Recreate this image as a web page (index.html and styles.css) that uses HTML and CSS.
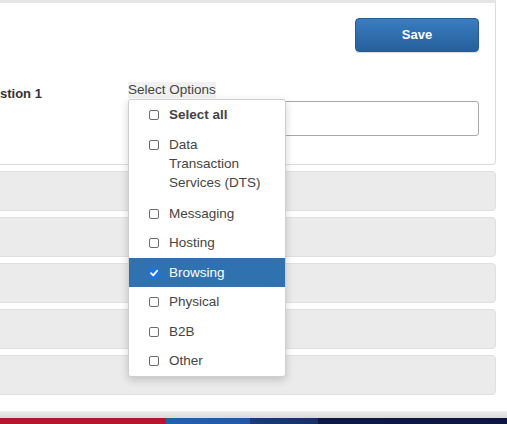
FILE: index.html
```html
<!DOCTYPE html>
<html>
<head>
<meta charset="utf-8">
<link rel="stylesheet" href="styles.css">
</head>
<body>
<div class="page">
  <div class="topband"></div>
  <div class="panel">
    <div class="actions">
      <button class="save">Save</button>
    </div>
    <div class="form-row">
      <div class="q-label"><span class="q-text">stion 1</span></div>
      <div class="field">
        <span class="field-label">Select Options</span>
        <div class="select-box"></div>
        <ul class="menu">
          <li class="item"><span class="cb"></span><span class="txt bold">Select all</span></li>
          <li class="item item-tall"><span class="cb"></span><span class="txt">Data<br>Transaction<br>Services (DTS)</span></li>
          <li class="item"><span class="cb"></span><span class="txt">Messaging</span></li>
          <li class="item"><span class="cb"></span><span class="txt">Hosting</span></li>
          <li class="item active"><span class="cb checked"><svg viewBox="0 0 10 10" width="10" height="10"><path d="M2 5.2 L4.2 7.4 L8.2 2.6" fill="none" stroke="#fff" stroke-width="1.8" stroke-linecap="round" stroke-linejoin="round"/></svg></span><span class="txt">Browsing</span></li>
          <li class="item"><span class="cb"></span><span class="txt">Physical</span></li>
          <li class="item"><span class="cb"></span><span class="txt">B2B</span></li>
          <li class="item"><span class="cb"></span><span class="txt">Other</span></li>
        </ul>
      </div>
    </div>
  </div>
  <div class="rows">
    <div class="row"></div>
    <div class="row"></div>
    <div class="row"></div>
    <div class="row"></div>
    <div class="row"></div>
  </div>
</div>
<div class="footer-line"></div>
<div class="footer-strip"></div>
</body>
</html>
```

FILE: styles.css
```css
html, body {
  margin: 0;
  padding: 0;
  background: #fff;
  font-family: "Liberation Sans", Arial, sans-serif;
  color: #333;
  overflow: hidden;
}

.page {
  width: 496px;
}

.topband {
  height: 3px;
  background: #e6e6e6;
}

.panel {
  box-sizing: border-box;
  height: 162px;
  background: #fff;
  border-right: 1px solid #dcdcdc;
  border-bottom: 1px solid #dcdcdc;
  border-bottom-right-radius: 4px;
  padding-top: 15px;
}

.actions {
  display: flex;
  justify-content: flex-end;
  padding-right: 16px;
}

.save {
  width: 124px;
  height: 34px;
  border: 1px solid #235d94;
  border-radius: 4px;
  background: linear-gradient(#3a7dc0, #265f9c);
  color: #fff;
  font-family: "Liberation Sans", Arial, sans-serif;
  font-size: 13px;
  font-weight: bold;
  padding: 0 0 2px;
  box-shadow: 0 1px 1px rgba(0,0,0,0.15);
}

.form-row {
  display: flex;
  margin-top: 28px;
}

.q-label {
  width: 128px;
  padding-top: 6px;
}

.q-text {
  display: block;
  font-size: 13px;
  font-weight: bold;
  line-height: 16px;
  color: #333;
  white-space: nowrap;
}

.field {
  position: relative;
  width: 351px;
}

.field-label {
  display: inline-block;
  font-size: 13.5px;
  line-height: 16px;
  color: #444;
  background: #f1f1f1;
  margin-top: -1px;
}

.select-box {
  box-sizing: border-box;
  margin-top: 3px;
  height: 35px;
  border: 1px solid #a9a9a9;
  border-radius: 3px;
  background: #fff;
}

.menu {
  position: absolute;
  top: 19px;
  left: 0;
  box-sizing: border-box;
  width: 158px;
  margin: 0;
  padding: 0;
  list-style: none;
  background: #fff;
  border: 1px solid #cfcfcf;
  border-radius: 3px;
  box-shadow: 0 3px 8px rgba(0,0,0,0.18);
  z-index: 2;
}

.item {
  display: flex;
  align-items: flex-start;
  padding: 5.25px 0 5.25px 20px;
  font-size: 13.5px;
  line-height: 19px;
  color: #444;
}

.item-tall {
  padding-bottom: 6.75px;
}

.cb {
  box-sizing: border-box;
  flex: none;
  width: 10px;
  height: 10px;
  margin-top: 5px;
  margin-right: 10px;
  border: 1px solid #6b6b6b;
  border-radius: 2px;
  background: #fff;
  display: flex;
}

.cb.checked {
  border: none;
  background: #1a73e8;
}

.txt.bold {
  font-weight: bold;
}

.item.active {
  background: #3072b0;
  color: #fff;
}

.rows {
  display: flex;
  flex-direction: column;
  gap: 6px;
  margin-top: 6px;
  margin-left: -6px;
}

.row {
  box-sizing: border-box;
  height: 40px;
  background: #ebebeb;
  border: 1px solid #e0e0e0;
  border-radius: 4px;
}

.footer-line {
  margin-top: 16px;
  height: 7px;
  background: linear-gradient(#ededed, #dadada);
}

.footer-strip {
  height: 10px;
  background: linear-gradient(90deg, #b8152e 0, #b8152e 166px, #1e63ae 166px, #1e5aa3 250px, #1a3b7e 250px, #172f6c 318px, #0e1846 318px, #0d1640 100%);
}
```
